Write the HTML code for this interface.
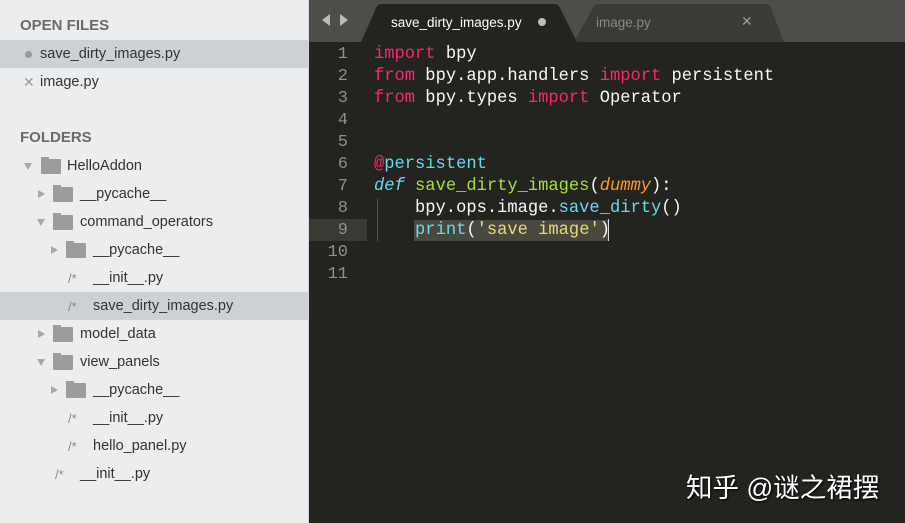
<!DOCTYPE html>
<html><head><meta charset="utf-8"><style>
*{margin:0;padding:0;box-sizing:border-box}
body{width:905px;height:523px;overflow:hidden;background:#272822;font-family:"Liberation Sans",sans-serif;position:relative}
#side{position:absolute;left:0;top:0;width:309px;height:523px;background:#ebedef;border-right:1px solid #d5d7da}
.h{position:absolute;left:20px;font-weight:bold;font-size:15px;color:#6b6b6b}
.row{position:absolute;left:0;width:308px;height:28px;font-size:14.5px;color:#333;line-height:29px}
.sel{background:#cdd0d5}
.tri{position:absolute;top:10px;width:0;height:0}
.tr{border-left:7px solid #a8a8a8;border-top:4.5px solid transparent;border-bottom:4.5px solid transparent}
.td{border-top:7px solid #a8a8a8;border-left:4.5px solid transparent;border-right:4.5px solid transparent;top:11px}
.fo{position:absolute;top:7px;width:20px;height:15px;background:#9c9c9c;border-radius:1px}
.fo:before{content:"";position:absolute;left:0;top:-2px;width:8px;height:3px;background:#9c9c9c}
.t{position:absolute}
.cm{position:absolute;color:#888;font-size:13px}
#tabs{position:absolute;left:309px;top:0;width:596px;height:42px;background:#4d4d4a}
#code{position:absolute;left:309px;top:42px;width:596px;height:481px;background:#23241f}
.ln{position:absolute;left:0;width:39px;text-align:right;font-family:"Liberation Mono",monospace;font-size:17px;color:#8f908a}
.cl{position:absolute;left:65px;font-family:"Liberation Mono",monospace;font-size:17.1px;color:#f8f8f2;white-space:pre}
.k{color:#f92672}.g{color:#a6e22e}.c{color:#66d9ef}.o{color:#fd971f;font-style:italic}.s{color:#e6db74}
</style></head><body>
<div id="side">
<div class="h" style="top:17px">OPEN FILES</div>
<div class="row sel" style="top:40px"><span style="position:absolute;left:25px;top:11px;width:7px;height:7px;border-radius:50%;background:#999"></span><span class="t" style="left:40px">save_dirty_images.py</span></div>
<div class="row" style="top:68px"><span class="t" style="left:23px;color:#999;font-size:14px">✕</span><span class="t" style="left:40px">image.py</span></div>
<div class="h" style="top:129px">FOLDERS</div>
<div class="row" style="top:152px"><span class="tri td" style="left:24px"></span><span class="fo" style="left:41px"></span><span class="t" style="left:67px">HelloAddon</span></div>
<div class="row" style="top:180px"><span class="tri tr" style="left:38px"></span><span class="fo" style="left:53px"></span><span class="t" style="left:80px">__pycache__</span></div>
<div class="row" style="top:208px"><span class="tri td" style="left:37px"></span><span class="fo" style="left:53px"></span><span class="t" style="left:80px">command_operators</span></div>
<div class="row" style="top:236px"><span class="tri tr" style="left:51px"></span><span class="fo" style="left:66px"></span><span class="t" style="left:93px">__pycache__</span></div>
<div class="row" style="top:264px"><span class="cm" style="left:68px">/*</span><span class="t" style="left:93px">__init__.py</span></div>
<div class="row sel" style="top:292px"><span class="cm" style="left:68px">/*</span><span class="t" style="left:93px">save_dirty_images.py</span></div>
<div class="row" style="top:320px"><span class="tri tr" style="left:38px"></span><span class="fo" style="left:53px"></span><span class="t" style="left:80px">model_data</span></div>
<div class="row" style="top:348px"><span class="tri td" style="left:37px"></span><span class="fo" style="left:53px"></span><span class="t" style="left:80px">view_panels</span></div>
<div class="row" style="top:376px"><span class="tri tr" style="left:51px"></span><span class="fo" style="left:66px"></span><span class="t" style="left:93px">__pycache__</span></div>
<div class="row" style="top:404px"><span class="cm" style="left:68px">/*</span><span class="t" style="left:93px">__init__.py</span></div>
<div class="row" style="top:432px"><span class="cm" style="left:68px">/*</span><span class="t" style="left:93px">hello_panel.py</span></div>
<div class="row" style="top:460px"><span class="cm" style="left:55px">/*</span><span class="t" style="left:80px">__init__.py</span></div>
</div>
<div id="tabs">
<span style="position:absolute;left:13px;top:14px;border-right:8px solid #bbb;border-top:6px solid transparent;border-bottom:6px solid transparent"></span>
<span style="position:absolute;left:31px;top:14px;border-left:8px solid #bbb;border-top:6px solid transparent;border-bottom:6px solid transparent"></span>
<svg style="position:absolute;left:0;top:0" width="596" height="42"><path d="M265 42 L285 6 Q287 4 291 4 L455 4 Q459 4 461 6 L475 42Z" fill="#3a3a37"/><path d="M52 42 L68 6 Q70 4 74 4 L244 4 Q248 4 250 6 L268 42Z" fill="#23241f"/></svg>
<span style="position:absolute;left:82px;top:15px;color:#fff;font-size:13.5px">save_dirty_images.py</span>
<span style="position:absolute;left:229px;top:18px;width:8px;height:8px;border-radius:50%;background:#bbb"></span>
<span style="position:absolute;left:287px;top:15px;color:#888;font-size:13.5px">image.py</span>
<span style="position:absolute;left:432px;top:13px;color:#999;font-size:14px">✕</span>
</div>
<div id="code">
<div style="position:absolute;left:0;top:177px;width:58px;height:22px;background:#3a3a33"></div>
<div style="position:absolute;left:105px;top:178px;width:194px;height:21px;background:#49483e"></div>
<div style="position:absolute;left:299px;top:177px;width:1px;height:22px;background:#ddd"></div>
<div style="position:absolute;left:68px;top:157px;width:1px;height:42px;background:#555"></div>
<div class="ln" style="top:3px">1</div><div class="ln" style="top:25px">2</div><div class="ln" style="top:47px">3</div><div class="ln" style="top:69px">4</div><div class="ln" style="top:91px">5</div><div class="ln" style="top:113px">6</div><div class="ln" style="top:135px">7</div><div class="ln" style="top:157px">8</div><div class="ln" style="top:179px">9</div><div class="ln" style="top:201px">10</div><div class="ln" style="top:223px">11</div>
<div class="cl" style="top:3px"><span class="k">import</span> bpy</div>
<div class="cl" style="top:25px"><span class="k">from</span> bpy.app.handlers <span class="k">import</span> persistent</div>
<div class="cl" style="top:47px"><span class="k">from</span> bpy.types <span class="k">import</span> Operator</div>
<div class="cl" style="top:113px"><span class="k">@</span><span class="c">persistent</span></div>
<div class="cl" style="top:135px"><span class="c" style="font-style:italic">def</span> <span class="g">save_dirty_images</span>(<span class="o">dummy</span>):</div>
<div class="cl" style="top:157px">    bpy.ops.image.<span class="c">save_dirty</span>()</div>
<div class="cl" style="top:179px">    <span class="c">print</span>(<span class="s">'save image'</span>)</div>
</div>
<div style="position:absolute;left:686px;top:466px;color:#fff;font-size:26.5px;font-family:'Liberation Sans','Noto Sans CJK SC',sans-serif;text-shadow:1px 1px 2px #000;white-space:nowrap">知乎 @谜之裙摆</div>
</body></html>
